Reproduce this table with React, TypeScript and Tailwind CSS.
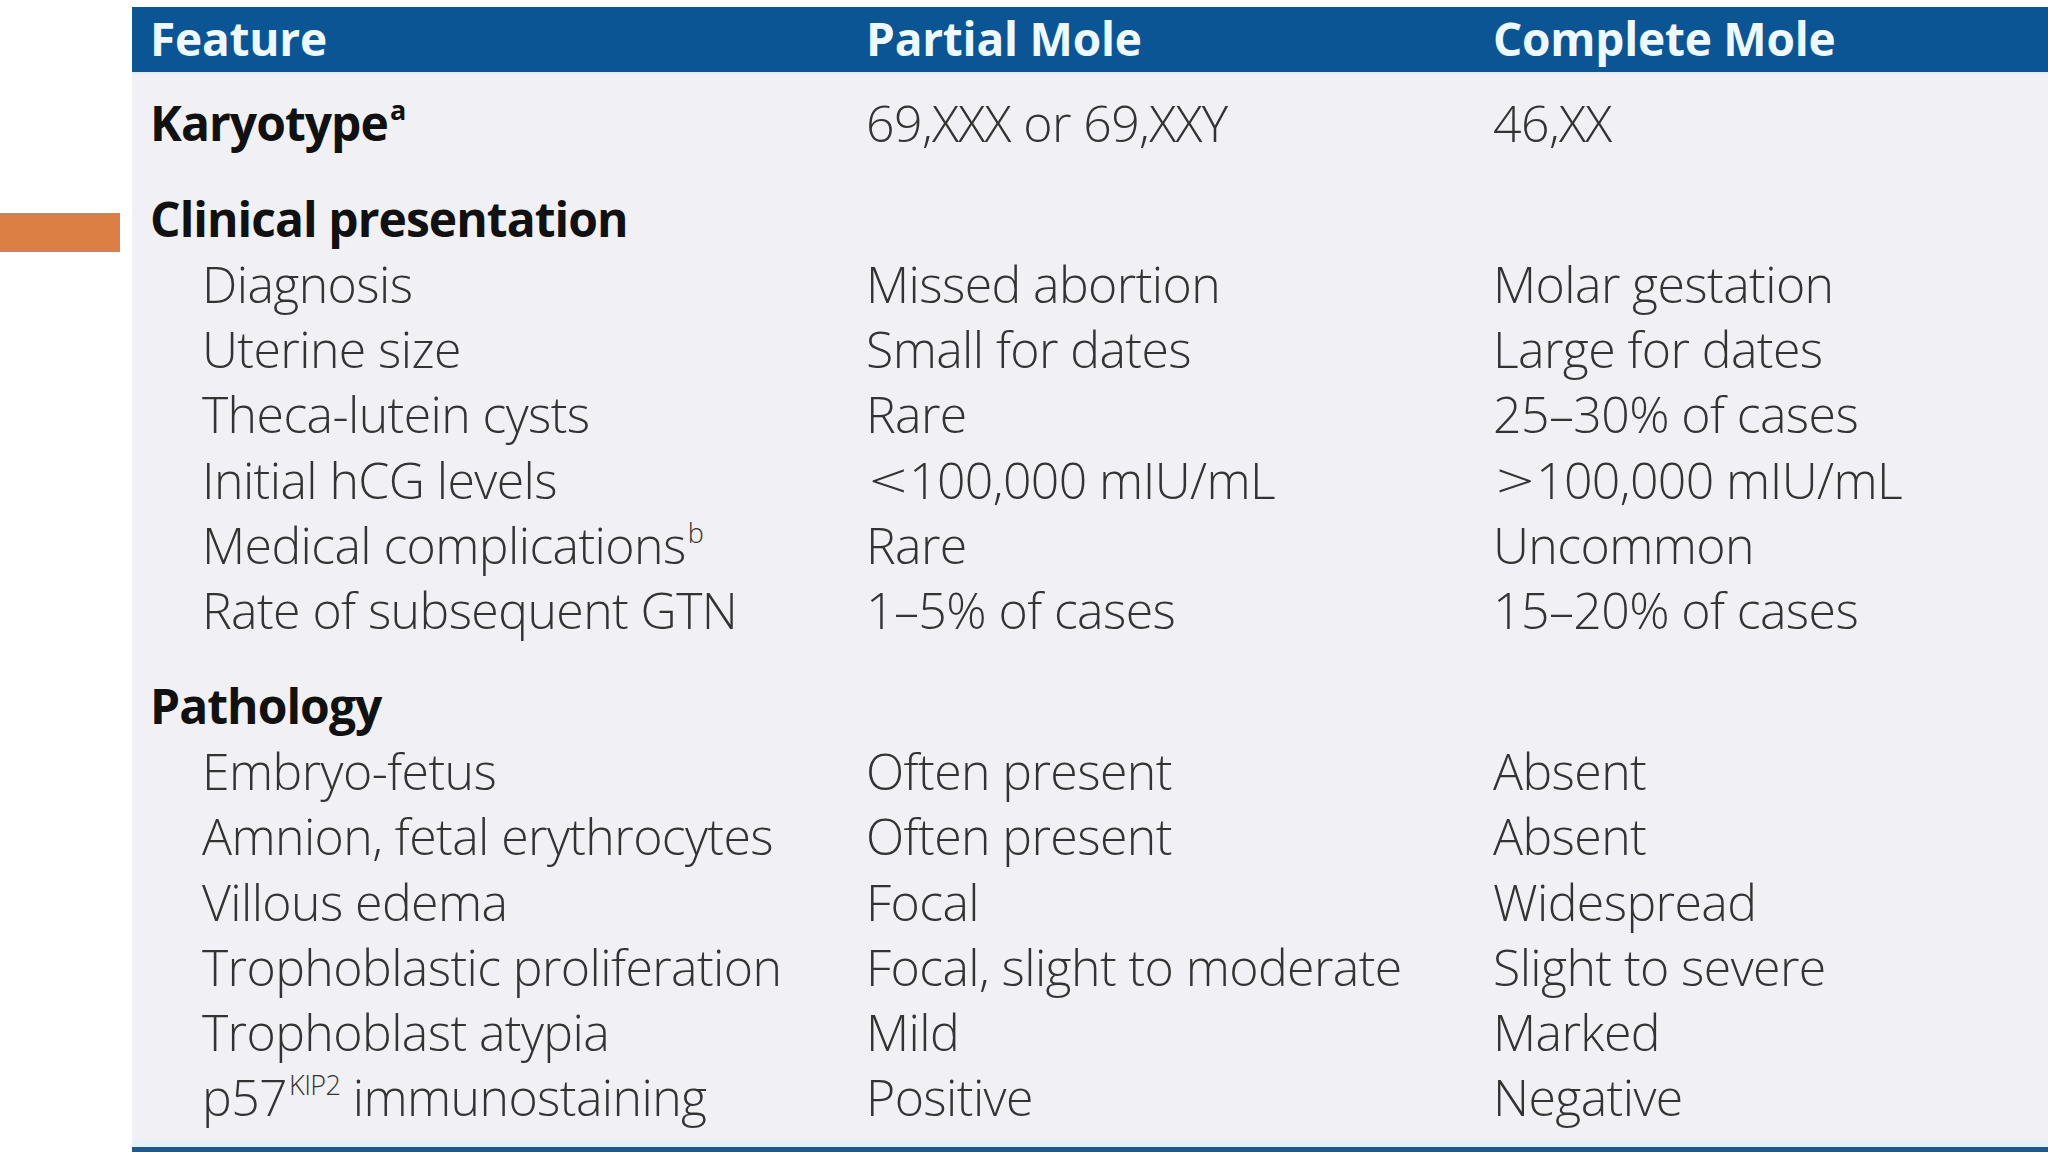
import React from "react";

type Row = {
  label: React.ReactNode;
  partial?: React.ReactNode;
  complete?: React.ReactNode;
  head?: boolean;
  gap?: boolean;
};

const supCls = "text-[27px] leading-none relative -top-[21px] ml-[2px]";
// the reference sets < and > as wide math signs
const mathCls = "inline-block origin-left scale-x-[1.35] ml-[3px] mr-[12px]";

const rows: Row[] = [
  {
    head: true,
    label: (
      <>
        Karyotype<sup className={supCls}>a</sup>
      </>
    ),
    partial: "69,XXX or 69,XXY",
    complete: "46,XX",
  },
  { head: true, gap: true, label: "Clinical presentation" },
  { label: "Diagnosis", partial: "Missed abortion", complete: "Molar gestation" },
  { label: "Uterine size", partial: "Small for dates", complete: "Large for dates" },
  { label: "Theca-lutein cysts", partial: "Rare", complete: "25–30% of cases" },
  {
    label: "Initial hCG levels",
    partial: (
      <>
        <span className={mathCls}>&lt;</span>100,000 mIU/mL
      </>
    ),
    complete: (
      <>
        <span className={mathCls}>&gt;</span>100,000 mIU/mL
      </>
    ),
  },
  {
    label: (
      <>
        Medical complications<sup className={supCls}>b</sup>
      </>
    ),
    partial: "Rare",
    complete: "Uncommon",
  },
  { label: "Rate of subsequent GTN", partial: "1–5% of cases", complete: "15–20% of cases" },
  { head: true, gap: true, label: "Pathology" },
  { label: "Embryo-fetus", partial: "Often present", complete: "Absent" },
  { label: "Amnion, fetal erythrocytes", partial: "Often present", complete: "Absent" },
  { label: "Villous edema", partial: "Focal", complete: "Widespread" },
  { label: "Trophoblastic proliferation", partial: "Focal, slight to moderate", complete: "Slight to severe" },
  { label: "Trophoblast atypia", partial: "Mild", complete: "Marked" },
  {
    label: (
      <>
        p57<sup className={supCls}>KIP2</sup> immunostaining
      </>
    ),
    partial: "Positive",
    complete: "Negative",
  },
];

export default function App() {
  return (
    <div className="w-[2048px] h-[1152px] bg-white flex overflow-hidden font-['Open_Sans',sans-serif]">
      {/* left gutter with the orange marker */}
      <div className="w-[132px] shrink-0">
        <div className="mt-[213px] w-[120px] h-[39px] bg-[#dc7f45]" />
      </div>

      <div className="flex-1 flex flex-col">
        {/* header */}
        <div className="mt-[7px] h-[65px] bg-[#0b5595] grid grid-cols-[716px_627px_1fr] items-center pl-[18px] pb-[4px] text-[46px] leading-[56px] font-bold text-[#eef9ff] tracking-[-0.005em]">
          <div>Feature</div>
          <div>Partial Mole</div>
          <div>Complete Mole</div>
        </div>
        <div className="h-[2px] bg-[#dcecf7]" />

        {/* body */}
        <div className="flex-1 bg-[#f1f1f5] pt-[16px]">
          {rows.map((r, i) => (
            <div
              key={i}
              className={`h-[65.2px] grid grid-cols-[716px_627px_1fr] items-center pl-[18px] text-[50px] leading-[60px] font-light tracking-[-0.012em] text-[#333333] whitespace-nowrap ${
                r.gap ? "mt-[31px]" : ""
              }`}
            >
              <div
                className={
                  r.head
                    ? "font-bold text-[48px] text-[#111111] tracking-[-0.02em]"
                    : "pl-[52px]"
                }
              >
                {r.label}
              </div>
              <div>{r.partial}</div>
              <div>{r.complete}</div>
            </div>
          ))}
        </div>

        <div className="h-[6px] bg-[#e3f2fb]" />
        <div className="h-[5px] bg-[#1f5a8c]" />
      </div>
    </div>
  );
}
